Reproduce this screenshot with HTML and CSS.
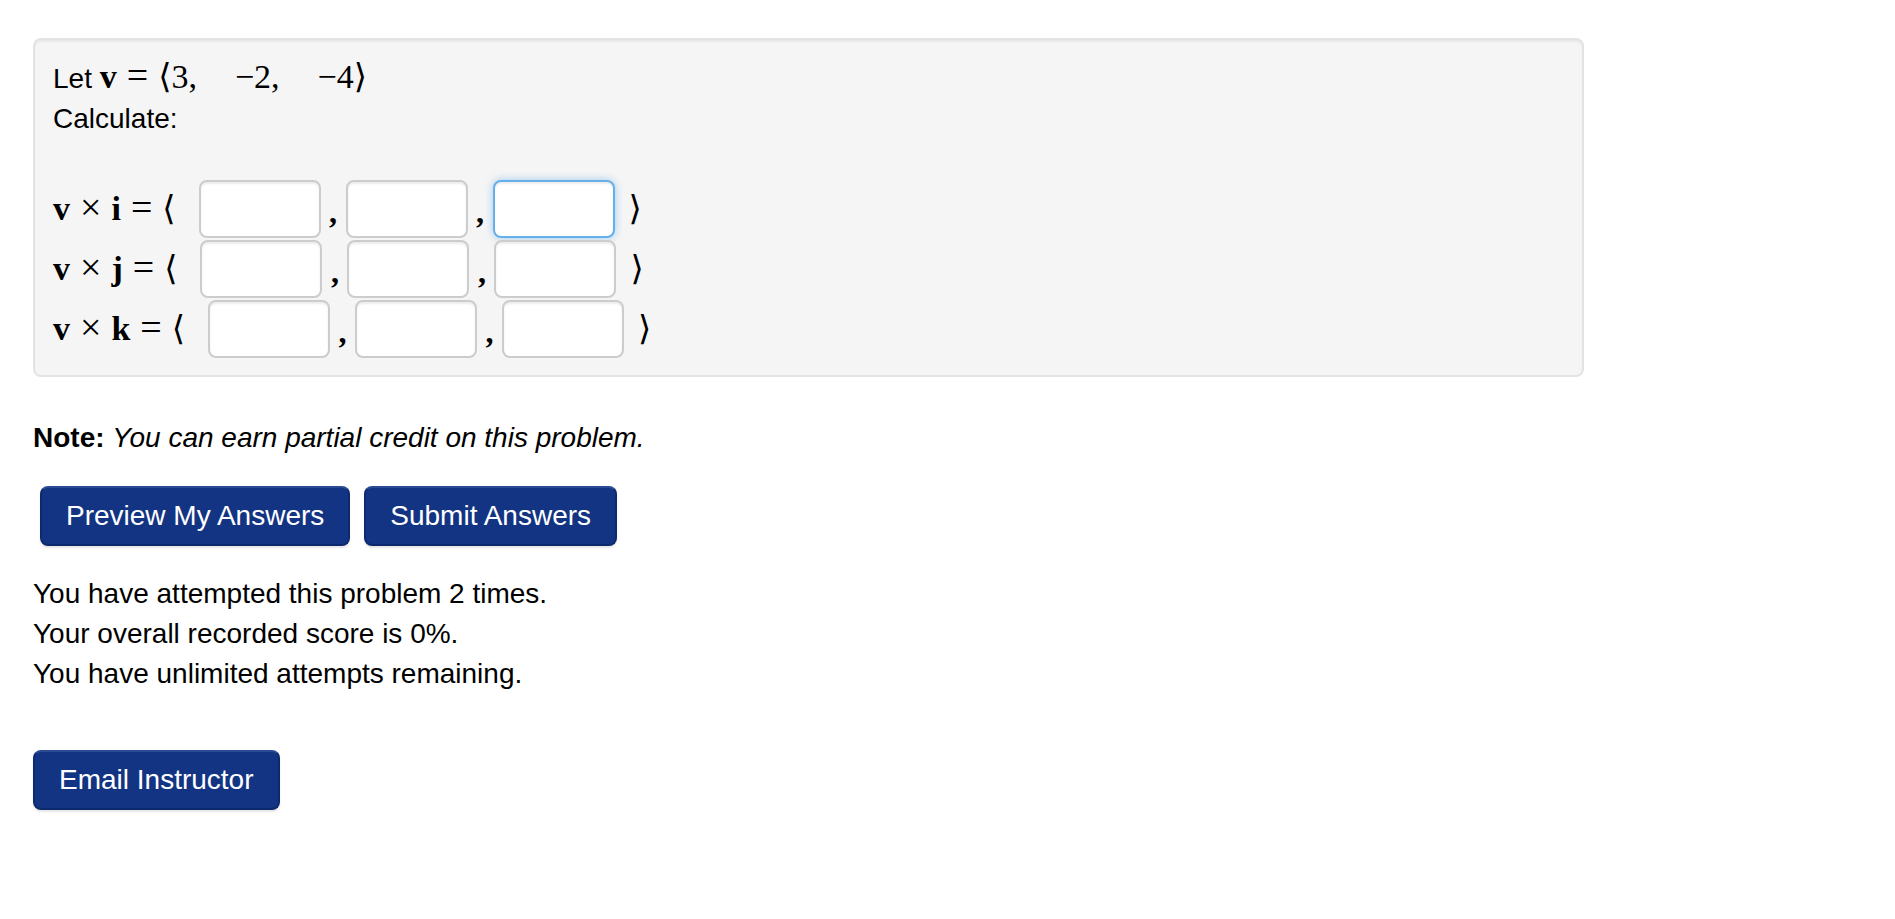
FILE: index.html
```html
<!DOCTYPE html>
<html lang="en">
<head>
    <meta charset="UTF-8">
    <meta name="viewport" content="width=device-width, initial-scale=1.0">
    <title>Problem</title>
    <link rel="stylesheet" href="styles.css">
</head>
<body>
    <div class="page">
        <div class="problem">
            <div class="line">Let <span class="math"><b class="mv">v</b><span class="rel">=</span>⟨3,<span class="quad"></span>−2,<span class="quad"></span>−4⟩</span></div>
            <div class="line">Calculate:</div>
            <div class="line"></div>

            <div class="answer-rows">
                <div class="row">
                    <span class="math label"><b class="mv">v</b><span class="bin">×</span><b class="mv">i</b><span class="rel">=</span>⟨</span>
                    <input type="text" class="answer">
                    <span class="sep">,</span>
                    <input type="text" class="answer">
                    <span class="sep">,</span>
                    <input type="text" class="answer focused">
                    <span class="math close">⟩</span>
                </div>
                <div class="row">
                    <span class="math label"><b class="mv">v</b><span class="bin">×</span><b class="mv">j</b><span class="rel">=</span>⟨</span>
                    <input type="text" class="answer">
                    <span class="sep">,</span>
                    <input type="text" class="answer">
                    <span class="sep">,</span>
                    <input type="text" class="answer">
                    <span class="math close">⟩</span>
                </div>
                <div class="row">
                    <span class="math label"><b class="mv">v</b><span class="bin">×</span><b class="mv">k</b><span class="rel">=</span>⟨</span>
                    <input type="text" class="answer">
                    <span class="sep">,</span>
                    <input type="text" class="answer">
                    <span class="sep">,</span>
                    <input type="text" class="answer">
                    <span class="math close">⟩</span>
                </div>
            </div>
        </div>

        <p class="note"><b>Note:</b> <i>You can earn partial credit on this problem.</i></p>

        <div class="buttons">
            <button class="btn">Preview My Answers</button>
            <button class="btn">Submit Answers</button>
        </div>

        <div class="attempts">
            <div>You have attempted this problem 2 times.</div>
            <div>Your overall recorded score is 0%.</div>
            <div>You have unlimited attempts remaining.</div>
        </div>

        <div class="email">
            <button class="btn">Email Instructor</button>
        </div>
    </div>
</body>
</html>
```

FILE: styles.css
```css
* {
    box-sizing: border-box;
}

body {
    margin: 0;
    background: #fff;
    color: #000;
    font-family: 'Liberation Sans', Arial, Helvetica, sans-serif;
    font-size: 28px;
    line-height: 40px;
}

.page {
    padding: 38px 33px;
}

.problem {
    width: 1551px;
    background: #f5f5f5;
    border: 2px solid #e3e3e3;
    border-radius: 8px;
    padding: 19px 18px 16px;
    box-shadow: inset 0 2px 2px rgba(0, 0, 0, 0.05);
}

.line {
    height: 40px;
}

.math {
    font-family: 'Liberation Serif', 'DejaVu Serif', 'Times New Roman', serif;
    font-size: 34px;
    line-height: 1;
}

.mv {
    font-weight: bold;
}

.rel,
.bin {
    font-size: 38px;
    line-height: 0;
    margin: 0 10px;
}

.quad {
    display: inline-block;
    width: 38px;
}

.row {
    display: flex;
    align-items: center;
    height: 60px;
}

.label {
    margin-right: 23px;
}

.answer {
    width: 122px;
    height: 58px;
    border: 2px solid #ccc;
    border-radius: 8px;
    background: #fff;
    box-shadow: inset 0 2px 2px rgba(0, 0, 0, 0.075);
    font-size: 28px;
    padding: 4px 8px;
    outline: none;
}

.answer.focused {
    border-color: #66afe9;
    box-shadow: inset 0 2px 2px rgba(0, 0, 0, 0.075), 0 0 8px rgba(102, 175, 233, 0.6);
}

.sep {
    width: 25px;
    text-align: center;
    font-family: 'Liberation Serif', 'DejaVu Serif', serif;
    font-size: 32px;
    font-weight: bold;
    padding-top: 6px;
}

.close {
    margin-left: 14px;
}

.note {
    margin: 41px 0 28px;
}

.buttons {
    display: flex;
    gap: 14px;
    padding-left: 7px;
    margin-bottom: 28px;
}

.btn {
    font-family: 'Liberation Sans', Arial, Helvetica, sans-serif;
    font-size: 28px;
    line-height: 40px;
    color: #fff;
    background: #133483;
    border: 2px solid #0e2a6e;
    border-top-color: #2a4a94;
    border-radius: 8px;
    padding: 8px 24px;
    cursor: pointer;
    box-shadow: 0 2px 2px rgba(0, 0, 0, 0.1);
}

.email {
    margin-top: 56px;
}
```
